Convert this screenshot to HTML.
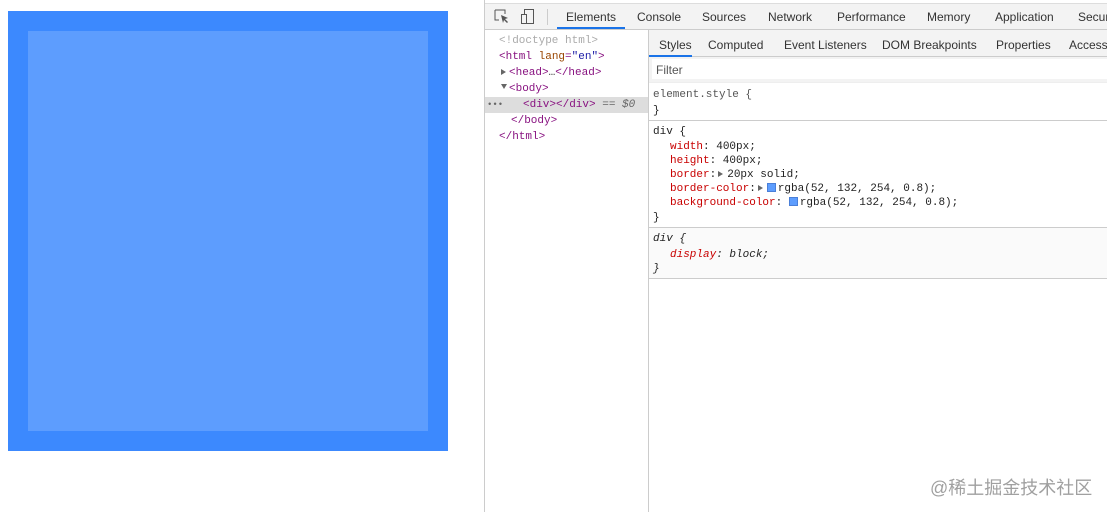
<!DOCTYPE html>
<html><head><meta charset="utf-8"><style>
*{margin:0;padding:0;box-sizing:border-box}
body{width:1107px;height:512px;overflow:hidden;background:#fff;position:relative;font-family:"Liberation Sans",sans-serif;font-size:12px;color:#333}
.box{position:absolute;left:8px;top:11px;width:440px;height:440px;background:rgb(93,157,254);border:20px solid rgb(60,137,254)}
.dt{position:absolute;left:484px;top:0;right:0;bottom:0;border-left:1px solid #ccc;background:#fff}
.topline{position:absolute;left:0;right:0;top:0;height:4px;background:#fff;border-bottom:1px solid #ddd}
.tb{position:absolute;left:0;right:0;top:4px;height:26px;background:#f3f3f3;border-bottom:1px solid #ccc}
.tab{position:absolute;top:1px;height:25px;line-height:25px;color:#333;font-size:12px;white-space:nowrap}
.mono{font-family:"Liberation Mono",monospace;font-size:11px}
.tree{position:absolute;left:0;top:33px;width:163px;bottom:0}
.tree div{position:absolute;height:16px;line-height:16px;white-space:nowrap}
.tg{color:#881280}.at{color:#994500}.av{color:#1a1aa6}.gr{color:#aaa}
.sp{position:absolute;left:163px;top:30px;right:0;bottom:0;border-left:1px solid #ccc}
.st{position:absolute;top:0;left:0;right:0;height:27px;background:#f3f3f3;border-bottom:1px solid #ccc}
.st span{position:absolute;top:2px;line-height:27px;white-space:nowrap}
.rule{position:absolute;left:0;right:0;border-bottom:1px solid #ccc}
.ln{position:absolute;left:4px;height:14px;line-height:14px;white-space:nowrap;color:#222}
.pr{color:#c80000}
.sw{display:inline-block;width:9px;height:9px;background:rgb(93,157,254);border:1px solid #4a7fd8;vertical-align:-1px;margin-right:2px}
.tri{display:inline-block;width:0;height:0;border-left:5px solid #666;border-top:3.5px solid transparent;border-bottom:3.5px solid transparent;margin:0 4px 0 2px}
</style></head><body>
<div class="box"></div>
<div class="dt">
 <div class="topline"></div>
 <div class="tb">
  <svg style="position:absolute;left:9px;top:5px" width="16" height="16"><path d="M1 1h10v4M1 1v10h4" stroke="#555" fill="none"/><path d="M7 6l7 3-3 1 3 3-1 1-3-3-1 3z" fill="#555"/></svg>
  <svg style="position:absolute;left:35px;top:4px" width="16" height="18"><rect x="4.5" y="1.5" width="9" height="14" stroke="#555" fill="none"/><rect x="1.5" y="6.5" width="5" height="9" stroke="#555" fill="#f3f3f3"/></svg>
  <div style="position:absolute;left:62px;top:5px;width:1px;height:16px;background:#ccc"></div>
  <div class="tab" style="left:81px">Elements</div>
  <div style="position:absolute;left:72px;top:23px;width:68px;height:2px;background:#1a73e8"></div>
  <div class="tab" style="left:152px">Console</div>
  <div class="tab" style="left:217px">Sources</div>
  <div class="tab" style="left:283px">Network</div>
  <div class="tab" style="left:352px">Performance</div>
  <div class="tab" style="left:442px">Memory</div>
  <div class="tab" style="left:510px">Application</div>
  <div class="tab" style="left:593px">Secur</div>
 </div>
 <div class="tree mono">
  <div class="gr" style="left:14px;top:0">&lt;!doctype html&gt;</div>
  <div style="left:14px;top:16px"><span class="tg">&lt;html</span> <span class="at">lang</span><span class="tg">=</span><span class="av">"en"</span><span class="tg">&gt;</span></div>
  <div style="left:16px;top:32px"><span class="tri" style="margin:0 3px 0 0"></span><span class="tg">&lt;head&gt;</span>…<span class="tg">&lt;/head&gt;</span></div>
  <div style="left:16px;top:48px"><span style="display:inline-block;border-top:5px solid #666;border-left:3.5px solid transparent;border-right:3.5px solid transparent;margin-right:2px;vertical-align:2px"></span><span class="tg">&lt;body&gt;</span></div>
  <div style="left:0;top:64px;width:163px;background:#ddd"><span style="color:#666;margin-left:2px;font-size:9px">•••</span><span style="position:absolute;left:38px"><span class="tg">&lt;div&gt;&lt;/div&gt;</span> <span style="color:#666">== <i>$0</i></span></span></div>
  <div class="tg" style="left:26px;top:80px">&lt;/body&gt;</div>
  <div class="tg" style="left:14px;top:96px">&lt;/html&gt;</div>
 </div>
 <div class="sp">
  <div class="st">
   <span style="left:10px">Styles</span>
   <div style="position:absolute;left:0;top:25px;width:43px;height:2px;background:#1a73e8"></div>
   <span style="left:59px">Computed</span>
   <span style="left:135px">Event Listeners</span>
   <span style="left:233px">DOM Breakpoints</span>
   <span style="left:347px">Properties</span>
   <span style="left:420px">Accessi</span>
  </div>
  <div style="position:absolute;left:0;right:0;top:27px;height:25px;background:#f3f3f3"><div style="position:absolute;left:3px;right:0;top:2px;height:20px;background:#fff;line-height:22px;padding-left:4px;color:#555">Filter</div></div>
  <div class="mono">
   <div class="rule" style="top:52px;height:39px;border-top:1px solid #eee"></div>
   <div class="ln" style="top:58px;color:#555">element.style {</div>
   <div class="ln" style="top:74px">}</div>
   <div class="rule" style="top:91px;height:107px"></div>
   <div class="ln" style="top:95px">div {</div>
   <div class="ln" style="top:110px;left:21px"><span class="pr">width</span>: 400px;</div>
   <div class="ln" style="top:124px;left:21px"><span class="pr">height</span>: 400px;</div>
   <div class="ln" style="top:138px;left:21px"><span class="pr">border</span>:<span class="tri"></span>20px solid;</div>
   <div class="ln" style="top:152px;left:21px"><span class="pr">border-color</span>:<span class="tri"></span><span class="sw"></span>rgba(52, 132, 254, 0.8);</div>
   <div class="ln" style="top:166px;left:21px"><span class="pr">background-color</span>: <span class="sw"></span>rgba(52, 132, 254, 0.8);</div>
   <div class="ln" style="top:181px">}</div>
   <div class="rule" style="top:198px;height:51px;background:#fafafa"></div>
   <div class="ln" style="top:202px;font-style:italic">div {</div>
   <div class="ln" style="top:218px;left:21px;font-style:italic"><span class="pr">display</span>: block;</div>
   <div class="ln" style="top:232px;font-style:italic">}</div>
  </div>
 </div>
</div>
<div style="position:absolute;left:930px;top:474px;font-family:'Liberation Sans','Noto Sans CJK SC',sans-serif;font-size:18px;color:#a0a0a0">@稀土掘金技术社区</div>
</body></html>
